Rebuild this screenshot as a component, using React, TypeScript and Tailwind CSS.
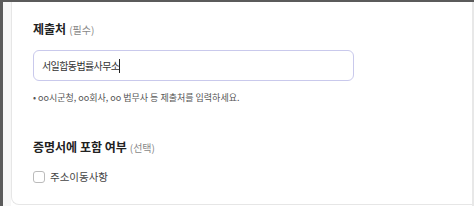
import React from 'react';

const font = { fontFamily: '"Noto Sans CJK KR", "Noto Sans", sans-serif' };

export default function App() {
  return (
    <div className="w-[474px] h-[206px] bg-white overflow-hidden flex flex-col" style={font}>
      <div className="h-[2px] bg-[#5b5b5b]" />
      <div className="flex flex-1">
        <div className="w-[3px] bg-[#5b5b5b]" />
        <div className="w-[8px] bg-[#f7f7f7]" />
        <div className="flex-1 h-[203px] bg-white border-l border-b border-[#e6e6e6] rounded-bl-[8px] pl-[21px] pt-[18px]">
          <div className="flex items-baseline gap-[3px] h-[16px]">
            <span className="text-[12px] font-bold text-[#222]">제출처</span>
            <span className="text-[10px] text-[#888]">(필수)</span>
          </div>
          <div className="mt-[14px] w-[321px] h-[31px] rounded-[6px] border border-[#c9c9ec] flex items-center px-[8px]">
            <span className="text-[10px] tracking-[-0.6px] text-[#333]">서일합동법률사무소</span>
            <span className="w-px h-[14px] bg-[#222]" />
          </div>
          <p className="mt-[10px] text-[9px] text-[#555] leading-[14px]">• oo시군청, oo회사, oo 법무사 등 제출처를 입력하세요.</p>
          <div className="mt-[33px] flex items-baseline gap-[3px] h-[16px]">
            <span className="text-[12px] font-bold text-[#222]">증명서에 포함 여부</span>
            <span className="text-[10px] text-[#888]">(선택)</span>
          </div>
          <label className="mt-[15px] flex items-center gap-[5px]">
            <span className="w-[12px] h-[12px] rounded-[3px] border border-[#bbb] bg-white" />
            <span className="text-[10.5px] text-[#444]">주소이동사항</span>
          </label>
        </div>
        <div className="w-[2px] bg-[#e8e8e8]" />
      </div>
    </div>
  );
}
